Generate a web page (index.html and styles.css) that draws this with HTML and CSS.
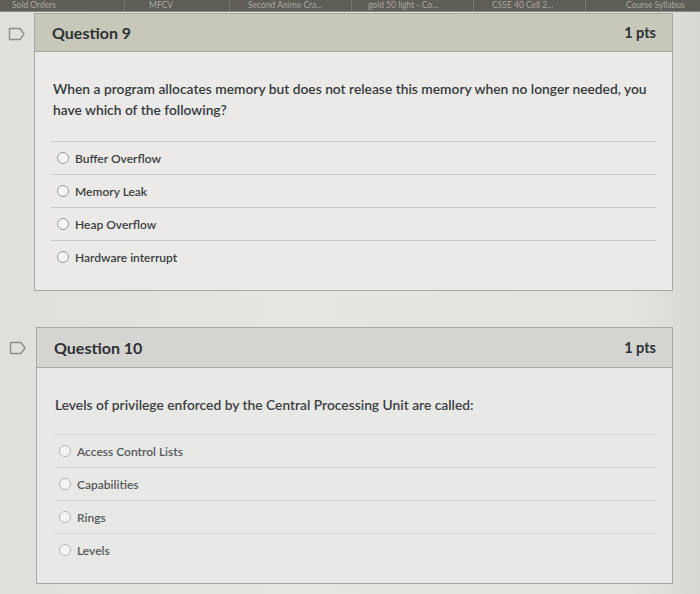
FILE: index.html
```html
<!DOCTYPE html>
<html>
<head>
<meta charset="utf-8">
<link rel="stylesheet" href="styles.css">
</head>
<body>
<div class="topbar">
  <span class="tab t1">Sold Orders</span>
  <span class="tab t2">MFCV</span>
  <span class="tab t3">Second Anime Cra...</span>
  <span class="tab t4">gold 50 light - Co...</span>
  <span class="tab t5">CSSE 40 Cell 2...</span>
  <span class="tab t6">Course Syllabus</span>
</div>
<main class="page">
  <section class="qrow q9">
    <div class="flag">
      <svg width="18" height="14" viewBox="0 0 18 14"><path d="M1.5 1.5 H12 L16 7 L12 12.5 H1.5 Z" fill="none" stroke="#8d8d8a" stroke-width="1.4" stroke-linejoin="round"/></svg>
    </div>
    <div class="card">
      <div class="head"><span class="title">Question 9</span><span class="pts">1 pts</span></div>
      <div class="body">
        <p class="qtext">When a program allocates memory but does not release this memory when no longer needed, you have which of the following?</p>
        <ul class="answers">
          <li><span class="radio"></span>Buffer Overflow</li>
          <li><span class="radio"></span>Memory Leak</li>
          <li><span class="radio"></span>Heap Overflow</li>
          <li><span class="radio"></span>Hardware interrupt</li>
        </ul>
      </div>
    </div>
  </section>
  <section class="qrow q10">
    <div class="flag">
      <svg width="18" height="14" viewBox="0 0 18 14"><path d="M1.5 1.5 H12 L16 7 L12 12.5 H1.5 Z" fill="none" stroke="#8d8d8a" stroke-width="1.4" stroke-linejoin="round"/></svg>
    </div>
    <div class="card">
      <div class="head"><span class="title">Question 10</span><span class="pts">1 pts</span></div>
      <div class="body">
        <p class="qtext">Levels of privilege enforced by the Central Processing Unit are called:</p>
        <ul class="answers">
          <li><span class="radio"></span>Access Control Lists</li>
          <li><span class="radio"></span>Capabilities</li>
          <li><span class="radio"></span>Rings</li>
          <li><span class="radio"></span>Levels</li>
        </ul>
      </div>
    </div>
  </section>
</main>
</body>
</html>
```
FILE: styles.css
```css
* { box-sizing: border-box; }
html, body { margin: 0; padding: 0; }
body {
  width: 700px;
  height: 594px;
  overflow: hidden;
  background: linear-gradient(90deg, #e0dfdc 0%, #e6e5e2 40%, #e4e3e0 90%, #d9d8d5 100%);
  font-family: Lato, "Liberation Sans", sans-serif;
  color: #34383a;
}
.topbar {
  height: 12px;
  background: #5e5e57;
  display: flex;
  overflow: hidden;
  border-bottom: 1px solid #8a8a84;
}
.tab {
  color: #a9a9a0;
  font-size: 8.5px;
  line-height: 11px;
  white-space: nowrap;
  border-right: 1px solid #777770;
  padding-left: 12px;
}
.t1 { width: 125px; }
.t2 { width: 105px; padding-left: 24px; }
.t3 { width: 122px; padding-left: 18px; }
.t4 { width: 122px; padding-left: 16px; }
.t5 { width: 112px; padding-left: 18px; }
.t6 { flex: 1; padding-left: 40px; border-right: 0; }

.page {
  display: flex;
  flex-direction: column;
  gap: 36px;
  padding-top: 1px;
}
.qrow {
  display: grid;
  grid-template-columns: 34px 639px;
}
.q10 { grid-template-columns: 36px 637px; }
.flag {
  display: flex;
  justify-content: center;
  padding-top: 14px;
  padding-left: 0;
}
.card {
  border: 1px solid #a8a8a2;
  background: #ebeae8;
}
.head {
  height: 38px;
  display: flex;
  align-items: center;
  justify-content: space-between;
  padding: 0 16px 0 17px;
  background: #c7c8b9;
  border-bottom: 1px solid #a9a9a2;
}
.q10 .head {
  height: 40px;
  background: #d4d4d1;
  padding-left: 17px;
}
.title {
  font-size: 16px;
  font-weight: 700;
  color: #2e3234;
}
.pts {
  font-size: 14.5px;
  font-weight: 700;
  color: #2e3234;
}
.body {
  padding: 26px 16px 17px 16px;
}
.qtext {
  margin: 0 0 21px 2px;
  font-size: 13.8px;
  line-height: 21px;
  font-weight: 600;
  color: #353a3d;
}
.answers {
  list-style: none;
  margin: 0;
  padding: 0;
}
.answers li {
  height: 33px;
  display: flex;
  align-items: center;
  border-top: 1px solid #c9c9c5;
  font-size: 12px;
  font-weight: 600;
  color: #3a3e40;
  padding-left: 6px;
}
.radio {
  width: 12px;
  height: 12px;
  border-radius: 50%;
  border: 1.5px solid #9a9a97;
  background: #f4f4f2;
  margin-right: 6px;
  flex: none;
}
.q10 .card { background: #e8e8e6; }
.q10 .body { padding: 26px 16px 17px 16px; }
.q10 .qtext { margin-bottom: 19px; color: #3c4043; }
.q10 .answers li { color: #55595b; border-top-color: #d6d6d3; }
.q10 .radio { border-color: #b4b4b1; }
```
